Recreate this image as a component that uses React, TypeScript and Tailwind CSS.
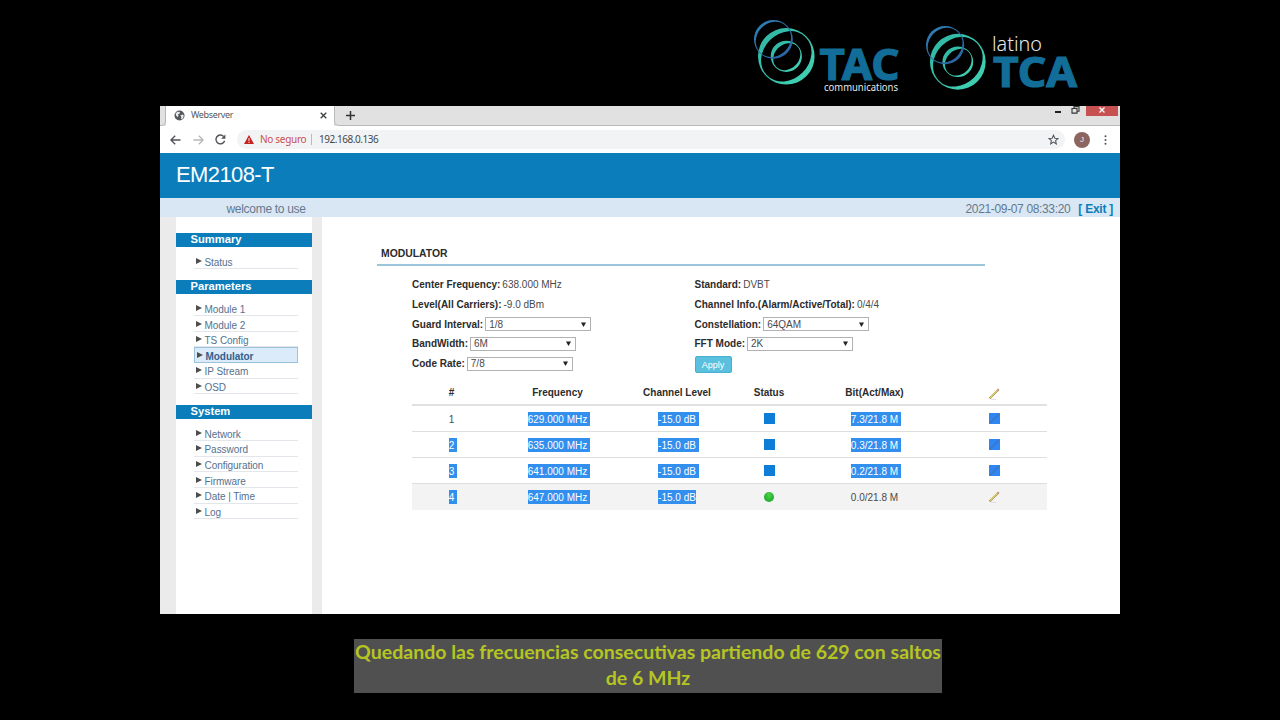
import React from 'react';
import { clsx } from 'clsx';

const MENU = [
  { title: 'Summary', items: ['Status'] },
  { title: 'Parameters', items: ['Module 1', 'Module 2', 'TS Config', 'Modulator', 'IP Stream', 'OSD'] },
  { title: 'System', items: ['Network', 'Password', 'Configuration', 'Firmware', 'Date | Time', 'Log'] },
];

const CHANNELS = [
  { id: 1, frequency: '629.000 MHz', level: '-15.0 dB', bit: '7.3/21.8 M', idSelected: false, selected: true },
  { id: 2, frequency: '635.000 MHz', level: '-15.0 dB', bit: '0.3/21.8 M', idSelected: true, selected: true },
  { id: 3, frequency: '641.000 MHz', level: '-15.0 dB', bit: '0.2/21.8 M', idSelected: true, selected: true },
  { id: 4, frequency: '647.000 MHz', level: '-15.0 dB', bit: '0.0/21.8 M', idSelected: true, selected: false },
];

const COLUMNS = 'grid grid-cols-[79px_133px_106px_78px_133px_106px] items-center justify-items-center';

// Each ring is a circle with a tilted ellipse cut out of it
function Rings({ id }: { id: string }) {
  return (
    <>
      <defs>
        <linearGradient id={`${id}-green`} x1="0" y1="0" x2="1" y2="1">
          <stop offset="0" stopColor="#2fb5a4" />
          <stop offset="1" stopColor="#43d3b4" />
        </linearGradient>
        <linearGradient id={`${id}-blue`} x1="0" y1="0" x2="1" y2="1">
          <stop offset="0" stopColor="#2f7fb6" />
          <stop offset="1" stopColor="#2a62a0" />
        </linearGradient>
      </defs>
      <g fillRule="evenodd">
        <path fill={`url(#${id}-green)`} d="M4 36.3a28.3 28.3 0 1 0 56.6 0a28.3 28.3 0 1 0 -56.6 0ZM13.14 55.46A27.1 22.6 -45 1 0 51.46 17.14A27.1 22.6 -45 1 0 13.14 55.46Z" />
        <path fill={`url(#${id}-green)`} d="M16.7 36.3a15.6 15.6 0 1 0 31.2 0a15.6 15.6 0 1 0 -31.2 0ZM22.4 47.1A14.7 12.2 -45 1 0 43.2 26.3A14.7 12.2 -45 1 0 22.4 47.1Z" />
        <path fill={`url(#${id}-blue)`} d="M0 19.4a19.4 19.4 0 1 0 38.8 0a19.4 19.4 0 1 0 -38.8 0ZM6.4 32.4A18.4 15.9 -45 1 0 32.4 6.4A18.4 15.9 -45 1 0 6.4 32.4Z" />
      </g>
    </>
  );
}

function Logos() {
  return (
    <svg width="350" height="96" viewBox="0 0 350 96" className="ml-[740px] mt-[10px] block font-['Noto_Sans',sans-serif]">
      <g transform="translate(14 10)">
        <Rings id="tac" />
      </g>
      <text x="79.5" y="69.5" fill="#126d98" stroke="#126d98" strokeWidth="1.2" fontSize="43.5" fontWeight="700" textLength="80" lengthAdjust="spacingAndGlyphs">TAC</text>
      <text x="84" y="80.5" fill="#e8e8e8" fontSize="11" textLength="74" lengthAdjust="spacingAndGlyphs">communications</text>
      <g transform="translate(186 16) scale(.985)">
        <Rings id="tca" />
      </g>
      <text x="252" y="40.5" fill="#e8e8e8" fontSize="19.5" fontWeight="300" textLength="50" lengthAdjust="spacingAndGlyphs">latino</text>
      <text x="253" y="77" fill="#126d98" stroke="#126d98" strokeWidth="1.2" fontSize="42" fontWeight="700" textLength="84" lengthAdjust="spacingAndGlyphs">TCA</text>
    </svg>
  );
}

function TabStrip() {
  return (
    <div className="flex h-[20px] bg-[#e1e1e1]">
      <div className="w-[6px] rounded-br-[5px] border-r border-b border-[#b5b5b5]" />
      <div className="flex w-[168px] items-center bg-white pb-[2px] pl-[8px] pr-[7px]">
        <svg width="11" height="11" viewBox="0 0 12 12">
          <circle cx="6" cy="6" r="5.5" fill="#55585c" />
          <path fill="#e9eaeb" d="M2 3.5L4 2l2.5.3L6 4 4.2 5 5 6.4 3.8 7.5 2.2 6ZM7 5.8L9.5 5l1.2 1.4-1 2.8L7.6 10 8 8Z" />
        </svg>
        <span className="ml-[6px] flex-1 text-[9px] tracking-[-0.35px] text-[#55585c]">Webserver</span>
        <svg width="7" height="7" viewBox="0 0 7 7" stroke="#3c4043" strokeWidth="1.3">
          <path d="M.7.7l5.6 5.6M6.3.7L.7 6.3" />
        </svg>
      </div>
      <div className="flex flex-1 items-start rounded-bl-[5px] border-b border-l border-[#b9b9b9] pl-[11px] pt-[5px]">
        <svg width="9" height="9" viewBox="0 0 9 9" stroke="#333" strokeWidth="1.5">
          <path d="M4.5 0v9M0 4.5h9" />
        </svg>
        <div className="-mt-[5px] ml-auto flex items-start">
          <div className="mt-[5px] h-[2px] w-[6px] bg-[#222]" />
          <svg width="9" height="8" viewBox="0 0 9 8" className="ml-[10px] mr-px block" fill="none" stroke="#333" strokeWidth="1.1">
            <path d="M1 2.5h5v4.6H1ZM3 2V.6h5v4.6H6.5" />
          </svg>
          <div className="ml-[5px] mr-[2px] flex h-[10px] w-[32px] items-center justify-center bg-[#c75050] pb-[2px]">
            <svg width="6" height="6" viewBox="0 0 6 6" stroke="#fff" strokeWidth="1.3">
              <path d="M.5.5l5 5M5.5.5l-5 5" />
            </svg>
          </div>
        </div>
      </div>
    </div>
  );
}

function Toolbar() {
  return (
    <div className="flex h-[27px] items-center bg-white pl-[10px] pr-[13.5px]">
      <svg width="11" height="10" viewBox="0 0 11 10" fill="none" stroke="#505357" strokeWidth="1.4">
        <path d="M10.5 5H1M5.2.7L.9 5l4.3 4.3" />
      </svg>
      <svg width="11" height="10" viewBox="0 0 11 10" className="ml-[12px]" fill="none" stroke="#b4b6b8" strokeWidth="1.3">
        <path d="M.5 5H10M5.8.7L10.1 5 5.8 9.3" />
      </svg>
      <svg width="11" height="11" viewBox="0 0 11 11" className="ml-[11px]" fill="none" stroke="#505357" strokeWidth="1.4">
        <path d="M9.6 6.8A4.4 4.4 0 1 1 8.6 2.4" />
        <path fill="#505357" stroke="none" d="M10.4.5v4.3H6.1Z" />
      </svg>
      <div className="ml-[11px] flex h-[19px] w-[828px] items-center rounded-full bg-[#f1f3f4] pl-[7px] pr-[6px]">
        <svg width="10" height="9" viewBox="0 0 10 9">
          <path fill="#c5221f" d="M5 0L10 9H0Z" />
          <path stroke="#f6dcdc" strokeWidth="1.1" d="M5 3v3M5 6.8v1.1" />
        </svg>
        <span className="ml-[6px] w-[46px] whitespace-nowrap text-[10px] tracking-[-0.3px] text-[#c9504c]">No seguro</span>
        <span className="ml-[5px] h-[11px] w-px bg-[#b9bbbd]" />
        <span className="ml-[7px] text-[10px] tracking-[-0.45px] text-[#45484c]">192.168.0.136</span>
        <svg width="11" height="11" viewBox="0 0 24 24" className="ml-auto" fill="none" stroke="#505357" strokeWidth="2.2">
          <path d="M12 2.5l2.9 6.6 7 .7-5.3 4.7 1.6 7L12 17.8l-6.2 3.7 1.6-7L2.1 9.8l7-.7Z" />
        </svg>
      </div>
      <div className="ml-[9px] flex h-[16px] w-[16px] items-center justify-center rounded-full bg-[#8d6560] font-['Liberation_Sans',sans-serif] text-[8px] text-[#f3eceb]">J</div>
      <svg width="3" height="10" viewBox="0 0 3 10" className="ml-auto" fill="#505357">
        <circle cx="1.5" cy="1.3" r="1" />
        <circle cx="1.5" cy="5" r="1" />
        <circle cx="1.5" cy="8.7" r="1" />
      </svg>
    </div>
  );
}

function Sidebar() {
  return (
    <nav className="w-[162px] border-l-[16px] border-r-[10px] border-[#ebebeb] bg-white pt-[16px]">
      {MENU.map(group => (
        <div key={group.title} className="mb-[10.7px]">
          <h2 className="h-[14px] bg-[#0b7dbb] pl-[14.5px] text-[11.2px] font-bold leading-[13px] text-white">{group.title}</h2>
          <ul className="mt-[6.7px] ml-[18px] w-[104px]">
            {group.items.map(item => (
              <li
                key={item}
                className={clsx(
                  'flex h-[15.6px] items-center whitespace-nowrap border-b text-[10px]',
                  item === 'Modulator'
                    ? 'border border-[#9cc3dc] bg-[#dcebf9] pl-[2px] font-bold text-[#2f5f8f]'
                    : 'border-[#e3e6ea] pl-[2px] text-[#54718f]'
                )}
              >
                <svg width="6" height="6" viewBox="0 0 6 6" className="mr-[2.5px] shrink-0" fill="#4d4d4d">
                  <path d="M0 0L6 3L0 6Z" />
                </svg>
                <span className="pt-[3px] tracking-[-0.05px]">{item}</span>
              </li>
            ))}
          </ul>
        </div>
      ))}
    </nav>
  );
}

function Field({ label, value, select = false }: { label: string; value: string; select?: boolean }) {
  return (
    <div className="flex h-[19.7px] items-center whitespace-nowrap text-[#4a4a4a]">
      <b className="text-[#2b2b2b]">{label}</b>
      {select ? (
        <div className="ml-[2px] flex h-[14px] w-[106px] items-center justify-between border border-[#b2b2b2] pl-[3px] pr-[4px]">
          <span>{value}</span>
          <svg width="5" height="5" viewBox="0 0 5 5" fill="#222">
            <path d="M0 .5H5L2.5 5Z" />
          </svg>
        </div>
      ) : (
        <span className="ml-[2px]">{value}</span>
      )}
    </div>
  );
}

function Pencil() {
  return (
    <svg width="12" height="12" viewBox="0 0 12 12">
      <path stroke="#dcdcdc" d="M3 11.3h5" />
      <path stroke="#8c7f3c" strokeWidth="2" d="M1.6 10.4L10.4 1.6" />
      <path stroke="#e6d36b" strokeWidth="1.3" d="M2 9.7L9.8 1.9" />
      <path stroke="#c98d84" strokeWidth="2" d="M9.8 2.2l1-1" />
    </svg>
  );
}

function Cell({ selected, last = false, children }: { selected: boolean; last?: boolean; children: React.ReactNode }) {
  return (
    <span
      className={clsx(
        'h-[14px] whitespace-nowrap leading-[15px]',
        selected && 'bg-[#338fee] text-white',
        selected && !last && '-mr-[3px] pr-[3px]'
      )}
    >
      {children}
    </span>
  );
}

function ChannelTable() {
  return (
    <div className="ml-[35px] mt-[6px] w-[635px]">
      <div className={clsx(COLUMNS, 'h-[26px] border-b-2 border-[#e1e1e1] pt-px font-bold text-[#2b2b2b]')}>
        <span>#</span>
        <span>Frequency</span>
        <span>Channel Level</span>
        <span>Status</span>
        <span>Bit(Act/Max)</span>
        <span className="pt-[3px]"><Pencil /></span>
      </div>
      {CHANNELS.map(channel => (
        <div
          key={channel.id}
          className={clsx(COLUMNS, 'h-[26.1px] text-[#4a4a4a]', channel.id === 4 ? 'bg-[#f3f3f3]' : 'border-b border-[#dedede]')}
        >
          <Cell selected={channel.idSelected}>{channel.id}</Cell>
          <Cell selected>{channel.frequency}</Cell>
          <Cell selected last={channel.id === 4}>{channel.level}</Cell>
          {channel.selected ? (
            <span className="h-[11px] w-[11px] bg-[#0d7dd8]" />
          ) : (
            <span className="h-[10px] w-[10px] rounded-full bg-radial-[at_50%_30%] from-[#4fd24c] to-[#0d9f22]" />
          )}
          <Cell selected={channel.selected}>{channel.bit}</Cell>
          {channel.selected ? (
            <svg width="11" height="11" viewBox="0 0 11 11">
              <path fill="#2f86f2" d="M0 0h11v11H0Z" />
              <path stroke="#3f74bd" strokeWidth="1.3" d="M1 10L10 1" />
            </svg>
          ) : (
            <Pencil />
          )}
        </div>
      ))}
    </div>
  );
}

function Modulator() {
  return (
    <main className="flex-1 bg-white pl-[55px] pt-[26px] text-[10px]">
      <h1 className="h-[23px] w-[608px] border-b-2 border-[#9cc5db] pl-[4px] pt-[3px] text-[10.4px] font-bold leading-[15px] text-[#2b2b2b]">MODULATOR</h1>
      <div className="mt-[9px] ml-[35px] grid h-[99px] grid-cols-[282.5px_1fr]">
        <div>
          <Field label="Center Frequency:" value="638.000 MHz" />
          <Field label="Level(All Carriers):" value="-9.0 dBm" />
          <Field label="Guard Interval:" value="1/8" select />
          <Field label="BandWidth:" value="6M" select />
          <Field label="Code Rate:" value="7/8" select />
        </div>
        <div>
          <Field label="Standard:" value="DVBT" />
          <Field label="Channel Info.(Alarm/Active/Total):" value="0/4/4" />
          <Field label="Constellation:" value="64QAM" select />
          <Field label="FFT Mode:" value="2K" select />
          <button className="mt-[2px] block h-[17px] w-[37px] rounded-[2px] border border-[#46b0cf] bg-[#5bc0de] text-[9px] leading-[16px] text-white">Apply</button>
        </div>
      </div>
      <ChannelTable />
    </main>
  );
}

export default function App() {
  return (
    <div className="flex h-[720px] w-[1280px] flex-col overflow-hidden bg-black font-['Liberation_Sans',Arial,sans-serif]">
      <header className="h-[106px] shrink-0">
        <Logos />
      </header>

      <div className="ml-[160px] flex h-[508px] w-[960px] shrink-0 flex-col overflow-hidden bg-white">
        <div className="font-['Noto_Sans',sans-serif]">
          <TabStrip />
          <Toolbar />
        </div>
        <div className="flex h-[45px] shrink-0 items-center bg-[#0b7dbb] pb-[3px] pl-[16px] text-[22px] tracking-[-0.6px] text-white">EM2108-T</div>
        <div className="flex h-[19px] shrink-0 items-center bg-[#d8e7f3] pl-[66.5px] pr-[7px] pt-[2px] text-[#66788f]">
          <span className="text-[12px] tracking-[-0.3px]">welcome to use</span>
          <span className="ml-auto text-[12px] tracking-[-0.35px]">2021-09-07 08:33:20</span>
          <b className="ml-[8px] text-[12px] tracking-[-0.25px] text-[#0b7dbb]">[ Exit ]</b>
        </div>
        <div className="flex flex-1">
          <Sidebar />
          <Modulator />
        </div>
      </div>

      <p className="ml-[354px] mt-[25px] h-[54px] w-[588px] whitespace-nowrap bg-[#505050] text-center font-['Lato',sans-serif] text-[19.55px] font-bold leading-[26px] text-[#b5c522]">
        Quedando las frecuencias consecutivas partiendo de 629 con saltos
        <br />
        de 6 MHz
      </p>
    </div>
  );
}
